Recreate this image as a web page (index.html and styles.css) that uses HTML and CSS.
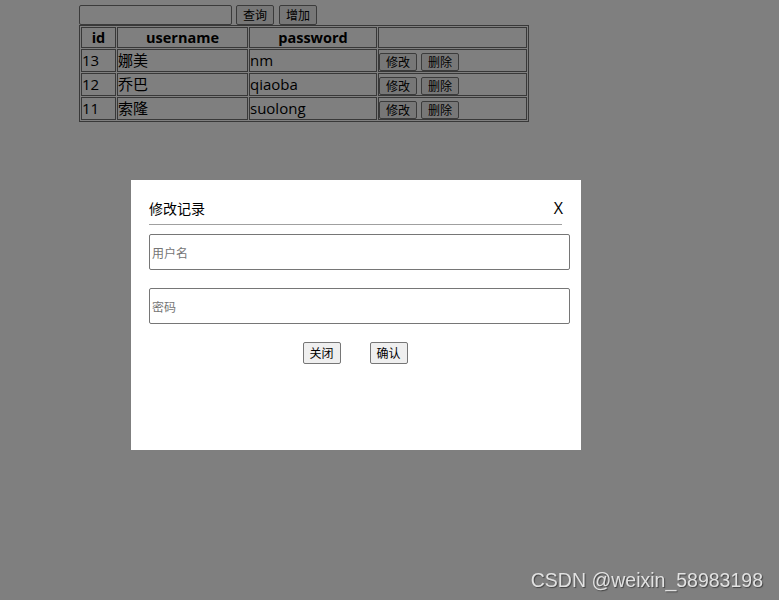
FILE: index.html
```html
<!DOCTYPE html>
<html lang="zh-CN">
<head>
<meta charset="utf-8">
<title>记录管理</title>
<link rel="stylesheet" href="styles.css">
</head>
<body>
<div class="page">
  <div class="toolbar">
    <input class="search" type="text">
    <button class="btn">查询</button>
    <button class="btn">增加</button>
  </div>
  <table class="grid">
    <colgroup>
      <col class="c-id"><col class="c-user"><col class="c-pass"><col class="c-act">
    </colgroup>
    <thead>
      <tr><th>id</th><th>username</th><th>password</th><th></th></tr>
    </thead>
    <tbody>
      <tr><td>13</td><td>娜美</td><td>nm</td><td><button class="btn small">修改</button><button class="btn small">删除</button></td></tr>
      <tr><td>12</td><td>乔巴</td><td>qiaoba</td><td><button class="btn small">修改</button><button class="btn small">删除</button></td></tr>
      <tr><td>11</td><td>索隆</td><td>suolong</td><td><button class="btn small">修改</button><button class="btn small">删除</button></td></tr>
    </tbody>
  </table>
</div>
<div class="overlay">
  <div class="modal">
    <div class="modal-head">
      <span class="modal-title">修改记录</span>
      <span class="modal-close">X</span>
    </div>
    <div class="modal-rule"></div>
    <input class="field" type="text" placeholder="用户名">
    <input class="field" type="password" placeholder="密码">
    <div class="modal-actions">
      <button class="btn mbtn">关闭</button>
      <button class="btn mbtn">确认</button>
    </div>
  </div>
  <div class="watermark">CSDN @weixin_58983198</div>
</div>
</body>
</html>
```

FILE: styles.css
```css
html, body {
  margin: 0;
  padding: 0;
  background: #fff;
  font-family: "Open Sans", "Noto Sans CJK SC", sans-serif;
}
.page {
  padding: 5px 0 0 79px;
}
.toolbar {
  display: flex;
  align-items: center;
  gap: 5px;
  height: 20px;
}
.search {
  box-sizing: border-box;
  width: 153px;
  height: 20px;
  margin: 0 -1px 0 0;
  border: 1px solid #767676;
  border-radius: 2px;
  padding: 1px 2px;
}
.btn {
  box-sizing: border-box;
  height: 20px;
  width: 38px;
  margin: 0;
  padding: 0;
  font-family: "Noto Sans CJK SC", sans-serif;
  font-size: 12px;
  line-height: 16px;
  color: #000;
  background: #efefef;
  border: 1px solid #767676;
  border-radius: 2px;
}
.grid {
  table-layout: fixed;
  border: 1px solid #707070;
  border-spacing: 1px;
  width: 450px;
  font-size: 15px;
  color: #000;
}
.grid th, .grid td {
  border: 1px solid #707070;
  padding: 0;
  overflow: hidden;
  white-space: nowrap;
}
.grid th {
  font-weight: 700;
  font-size: 14.5px;
  text-align: center;
  height: 19px;
  line-height: 19px;
}
.grid td {
  text-align: left;
  height: 21px;
  line-height: 21px;
  vertical-align: middle;
}
.c-id { width: 35px; }
.c-user { width: 131px; }
.c-pass { width: 128px; }
.c-act { width: 149px; }
.btn.small {
  height: 18px;
  line-height: 14px;
  margin: 0 4px 0 0;
  vertical-align: middle;
}
.overlay {
  position: fixed;
  inset: 0;
  background: rgba(0, 0, 0, 0.5);
}
.modal {
  position: absolute;
  left: 131px;
  top: 180px;
  box-sizing: border-box;
  width: 450px;
  height: 270px;
  background: #fff;
  padding: 17px 19px 0 18px;
}
.modal-head {
  display: flex;
  justify-content: space-between;
  align-items: center;
  height: 21px;
  font-family: "Noto Sans CJK SC", sans-serif;
  font-size: 14px;
  color: #000;
}
.modal-close {
  font-family: "Open Sans", sans-serif;
  font-size: 16px;
  margin-right: -1px;
}
.modal-rule {
  height: 1px;
  background: #a0a0a0;
  margin: 6px 0 9px;
}
.field {
  display: block;
  box-sizing: border-box;
  width: 421px;
  height: 36px;
  margin: 0 0 18px;
  padding: 0 2px;
  border: 1px solid #767676;
  border-radius: 2px;
  font-family: "Noto Sans CJK SC", sans-serif;
  font-size: 12px;
}
.field::placeholder { color: #757575; }
.modal-actions {
  display: flex;
  justify-content: center;
  gap: 29px;
  margin-top: 1px;
  padding-right: 1px;
}
.mbtn {
  height: 22px;
  font-size: 12px;
}
.watermark {
  position: absolute;
  right: 16px;
  bottom: 8px;
  font-family: "Liberation Sans", sans-serif;
  font-size: 19.5px;
  color: #e2e2e2;
  text-shadow: 1px 1px 1px #444;
}
```
